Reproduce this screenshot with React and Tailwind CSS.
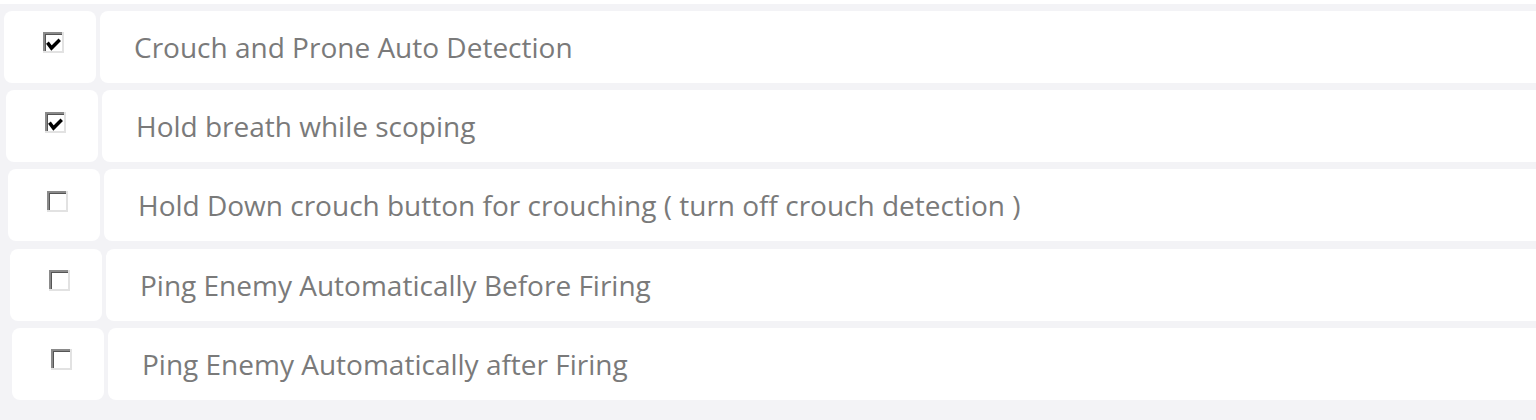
import React from "react";

function Box({ checked }) {
  return (
    <svg width="21" height="21" viewBox="0 0 21 21" className="block">
      <rect x="0" y="0" width="21" height="21" fill="#ffffff" />
      <rect x="0" y="0" width="21" height="2" fill="#8a8a8a" />
      <rect x="0" y="0" width="2" height="21" fill="#8a8a8a" />
      <rect x="2" y="2" width="17" height="1" fill="#555555" />
      <rect x="2" y="2" width="1" height="17" fill="#555555" />
      <rect x="0" y="19" width="21" height="2" fill="#e2e2e2" />
      <rect x="19" y="0" width="2" height="21" fill="#e2e2e2" />
      {checked && (
        <polyline
          points="5.5,12 8.5,16 15.5,9"
          fill="none"
          stroke="#000000"
          strokeWidth="3.5"
          strokeLinecap="square"
        />
      )}
    </svg>
  );
}

function Row({ checked, label, ml }) {
  return (
    <div className={`flex h-[72px] gap-[4px] ${ml}`}>
      <div className="flex w-[92px] shrink-0 items-center justify-center rounded-[8px] bg-white pb-[8px] pl-[6px]">
        <Box checked={checked} />
      </div>
      <div className="flex flex-1 items-center rounded-l-[8px] bg-white pl-[34px] text-[28px] text-[#7a7a7a]">
        {label}
      </div>
    </div>
  );
}

export default function App() {
  return (
    <div
      className="flex h-[420px] w-[1536px] flex-col gap-[7.25px] overflow-hidden bg-[#f3f3f6]"
      style={{ fontFamily: '"Open Sans", "Noto Sans", sans-serif' }}
    >
      <div className="h-[3.5px] shrink-0 bg-white" />
      <Row checked label="Crouch and Prone Auto Detection" ml="ml-[4px]" />
      <Row checked label="Hold breath while scoping" ml="ml-[6px]" />
      <Row
        checked={false}
        label="Hold Down crouch button for crouching ( turn off crouch detection )"
        ml="ml-[8px]"
      />
      <Row checked={false} label="Ping Enemy Automatically Before Firing" ml="ml-[10px]" />
      <Row checked={false} label="Ping Enemy Automatically after Firing" ml="ml-[12px]" />
    </div>
  );
}
